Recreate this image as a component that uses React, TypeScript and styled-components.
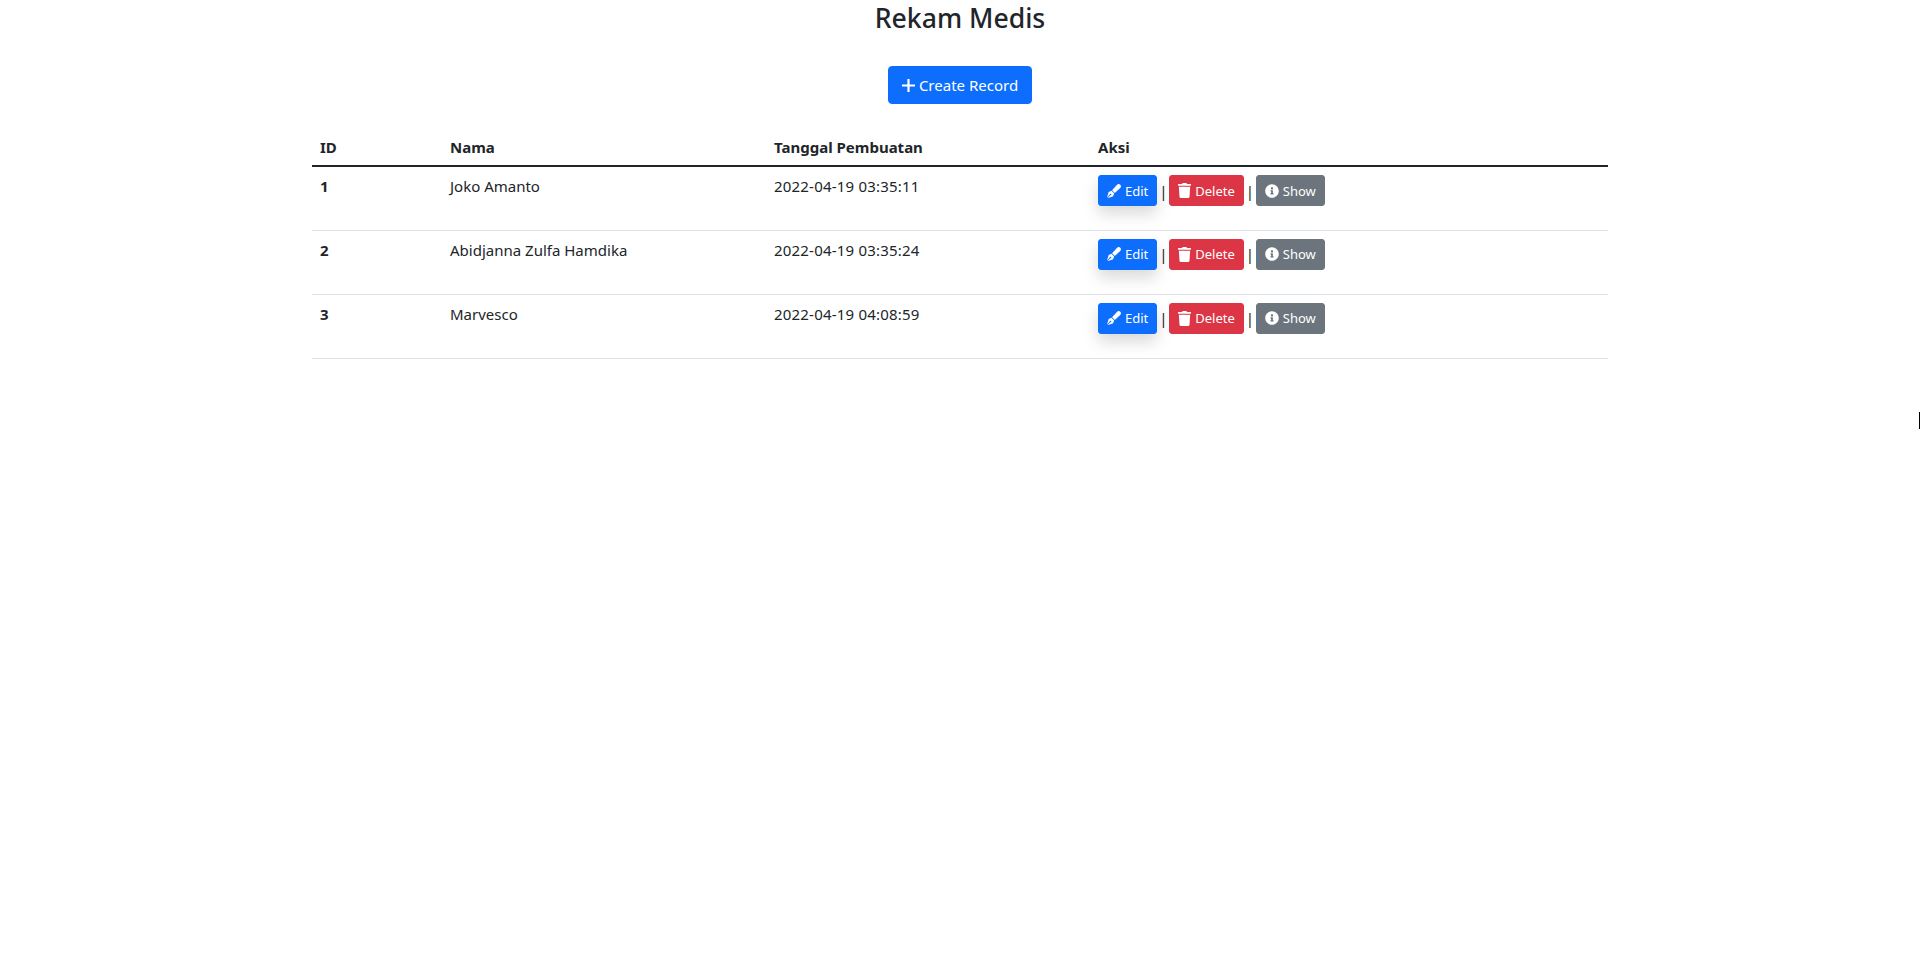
import * as React from 'react';
import styled, { createGlobalStyle } from 'styled-components';
import { FaPenFancy, FaTrash, FaInfoCircle } from 'react-icons/fa';

const records = [
  { id: 1, name: 'Joko Amanto', createdAt: '2022-04-19 03:35:11' },
  { id: 2, name: 'Abidjanna Zulfa Hamdika', createdAt: '2022-04-19 03:35:24' },
  { id: 3, name: 'Marvesco', createdAt: '2022-04-19 04:08:59' },
];

export default function App() {
  return (
    <Page>
      <GlobalStyle />
      <Title>Rekam Medis</Title>
      <CreateRow>
        <CreateButton>
          <svg width="13" height="13" viewBox="0 0 13 13" aria-hidden="true">
            <path d="M6.5 0v13M0 6.5h13" stroke="currentColor" strokeWidth="2.2" fill="none" />
          </svg>
          Create Record
        </CreateButton>
      </CreateRow>
      <Table>
        <thead>
          <tr>
            <HeadCell $width={130}>ID</HeadCell>
            <HeadCell $width={324}>Nama</HeadCell>
            <HeadCell $width={324}>Tanggal Pembuatan</HeadCell>
            <HeadCell>Aksi</HeadCell>
          </tr>
        </thead>
        <tbody>
          {records.map(record => (
            <tr key={record.id}>
              <IdCell>{record.id}</IdCell>
              <Cell>{record.name}</Cell>
              <DateCell>{record.createdAt}</DateCell>
              <Cell>
                <Actions>
                  <ActionButton $color="#0d6efd" $raised>
                    <FaPenFancy size={14} />
                    Edit
                  </ActionButton>
                  <Separator>|</Separator>
                  <ActionButton $color="#dc3545">
                    <TrashIcon size={15} />
                    Delete
                  </ActionButton>
                  <Separator>|</Separator>
                  <ActionButton $color="#6c757d">
                    <FaInfoCircle size={14} />
                    Show
                  </ActionButton>
                </Actions>
              </Cell>
            </tr>
          ))}
        </tbody>
      </Table>
      <TextCursor />
    </Page>
  );
}

const GlobalStyle = createGlobalStyle`
  html, body {
    margin: 0;
    background: #fff;
  }

  body {
    font-family: "Noto Sans", "Open Sans", sans-serif;
    font-size: 16px;
    line-height: 24px;
    color: #212529;
  }
`;

const Page = styled.div`
  width: 1296px;
  min-height: 975px;
  margin: 0 auto;
`;

const Title = styled.h2`
  margin: 0 0 30px;
  font-size: 26.6px;
  font-weight: 500;
  line-height: 36px;
  text-align: center;
`;

const CreateRow = styled.div`
  display: flex;
  justify-content: center;
  margin-bottom: 23px;
`;

const CreateButton = styled.button`
  display: inline-flex;
  align-items: center;
  gap: 4px;
  height: 38px;
  padding: 0 13px;
  border: 1px solid #0d6efd;
  border-radius: 4px;
  background: #0d6efd;
  color: #fff;
  font-family: inherit;
  font-size: 15px;
`;

const Table = styled.table`
  width: 100%;
  border-collapse: collapse;
  table-layout: fixed;
`;

const HeadCell = styled.th<{ $width?: number }>`
  box-sizing: border-box;
  width: ${p => (p.$width ? `${p.$width}px` : 'auto')};
  padding: 8px 8px 6px;
  border-bottom: 2px solid #212529;
  font-size: 15px;
  font-weight: 700;
  text-align: left;
`;

const Cell = styled.td`
  height: 64px;
  box-sizing: border-box;
  padding: 7px 8px 8px;
  border-bottom: 1px solid #dee2e6;
  font-size: 15px;
  vertical-align: top;
`;

const IdCell = styled(Cell)`
  font-weight: 700;
`;

const DateCell = styled(Cell)`
  letter-spacing: 0.2px;
`;

const Actions = styled.div`
  display: flex;
  align-items: center;
  gap: 4px;
  margin-top: 1px;
`;

const ActionButton = styled.button<{ $color: string; $raised?: boolean }>`
  display: inline-flex;
  align-items: center;
  gap: 4px;
  height: 31px;
  padding: 0 8px;
  border: 1px solid ${p => p.$color};
  border-radius: 3px;
  background: ${p => p.$color};
  color: #fff;
  font-family: inherit;
  font-size: 13px;
  box-shadow: ${p => (p.$raised ? '0 8px 16px rgba(0, 0, 0, 0.15)' : 'none')};
`;

const TrashIcon = styled(FaTrash)`
  margin: 0 -1px;
`;

const Separator = styled.span`
  display: flex;
  justify-content: center;
  width: 4px;
  font-size: 15px;
`;

const TextCursor = styled.div`
  position: absolute;
  top: 412px;
  right: 0;
  width: 1px;
  height: 17px;
  background: #000;
`;
